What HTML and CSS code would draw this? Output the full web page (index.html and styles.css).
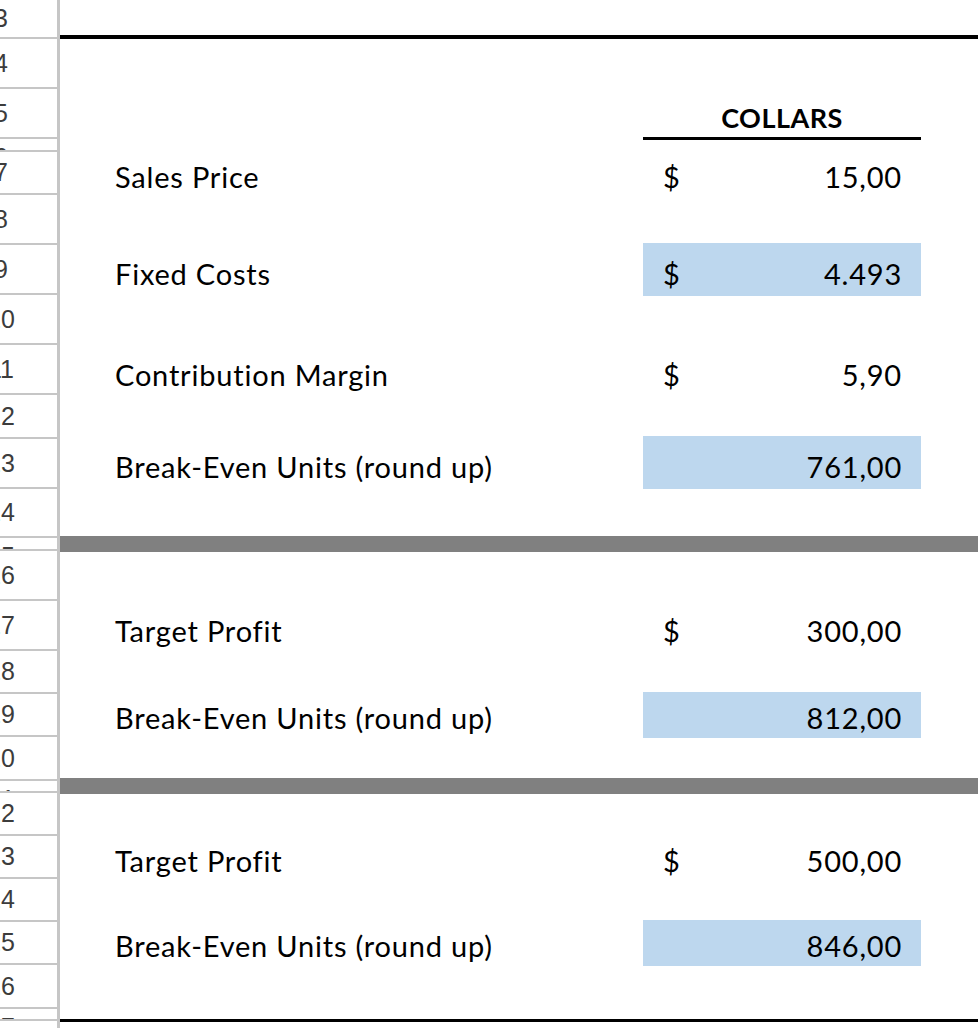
FILE: index.html
```html
<!DOCTYPE html>
<html lang="en">
<head>
<meta charset="utf-8">
<title>Break-Even Analysis</title>
<link rel="stylesheet" href="styles.css">
</head>
<body>
<div class="sheet">
  <div class="rowhead">
    <div class="rh h37"><span>3</span></div>
    <div class="rh h48"><span>4</span></div>
    <div class="rh h48"><span>5</span></div>
    <div class="rh h11 hidden"><span>6</span></div>
    <div class="rh h41"><span>7</span></div>
    <div class="rh h48"><span>8</span></div>
    <div class="rh h48"><span>9</span></div>
    <div class="rh h48"><span>10</span></div>
    <div class="rh h48"><span>11</span></div>
    <div class="rh h42"><span>12</span></div>
    <div class="rh h48"><span>13</span></div>
    <div class="rh h47"><span>14</span></div>
    <div class="rh h11 hidden"><span>15</span></div>
    <div class="rh h48"><span>16</span></div>
    <div class="rh h48"><span>17</span></div>
    <div class="rh h41"><span>18</span></div>
    <div class="rh h41"><span>19</span></div>
    <div class="rh h42"><span>20</span></div>
    <div class="rh h10 hidden"><span>21</span></div>
    <div class="rh h41"><span>22</span></div>
    <div class="rh h41"><span>23</span></div>
    <div class="rh h41"><span>24</span></div>
    <div class="rh h41"><span>25</span></div>
    <div class="rh h42"><span>26</span></div>
    <div class="rh h10 hidden"><span>27</span></div>
    <div class="rh h48"><span>28</span></div>
  </div>

  <div class="grid">
    <div class="rule rule-top"></div>

    <div class="line title-row">
      <div class="lbl"></div>
      <div class="title">COLLARS</div>
    </div>

    <div class="line row-sales">
      <div class="lbl">Sales Price</div>
      <div class="val"><span>$</span><span>15,00</span></div>
    </div>

    <div class="line tall row-fixed">
      <div class="lbl">Fixed Costs</div>
      <div class="val fill"><span>$</span><span>4.493</span></div>
    </div>

    <div class="line row-margin">
      <div class="lbl">Contribution Margin</div>
      <div class="val"><span>$</span><span>5,90</span></div>
    </div>

    <div class="line tall row-be1">
      <div class="lbl">Break-Even Units (round up)</div>
      <div class="val fill"><span></span><span>761,00</span></div>
    </div>

    <div class="bar bar-1"></div>

    <div class="line row-tp1">
      <div class="lbl">Target Profit</div>
      <div class="val"><span>$</span><span>300,00</span></div>
    </div>

    <div class="line mid row-be2">
      <div class="lbl">Break-Even Units (round up)</div>
      <div class="val fill"><span></span><span>812,00</span></div>
    </div>

    <div class="bar bar-2"></div>

    <div class="line row-tp2">
      <div class="lbl">Target Profit</div>
      <div class="val"><span>$</span><span>500,00</span></div>
    </div>

    <div class="line mid row-be3">
      <div class="lbl">Break-Even Units (round up)</div>
      <div class="val fill"><span></span><span>846,00</span></div>
    </div>

    <div class="rule rule-bottom"></div>
  </div>
</div>
</body>
</html>
```

FILE: styles.css
```css
html, body {
  margin: 0;
  padding: 0;
  background: #ffffff;
  overflow: hidden;
}

.sheet {
  display: flex;
  width: 978px;
  height: 1028px;
  overflow: hidden;
}

/* ---------- row header column ---------- */
.rowhead {
  flex: none;
  width: 57px;
  border-right: 3px solid #c6c6c6;
  display: flex;
  flex-direction: column;
}

.rh {
  flex: none;
  border-bottom: 2px solid #c6c6c6;
  overflow: hidden;
  display: flex;
  align-items: center;
  font-family: "Liberation Sans", Arial, sans-serif;
  font-size: 25px;
  line-height: 25px;
  color: #3c3c3c;
}

.rh span {
  flex: none;
  width: 110px;
  margin-left: -54px;
  text-align: center;
}

.rh.hidden {
  align-items: flex-start;
}

.rh.hidden span {
  padding-top: 6px;
}

.h10 { height: 10px; }
.h11 { height: 11px; }
.h37 { height: 37px; }
.h41 { height: 41px; }
.h42 { height: 42px; }
.h47 { height: 47px; }
.h48 { height: 48px; }

/* ---------- main grid ---------- */
.grid {
  flex: 1;
  display: flex;
  flex-direction: column;
  font-family: Lato, "Carlito", "Open Sans", sans-serif;
  font-size: 29px;
  letter-spacing: 0.8px;
  color: #000000;
}

.rule {
  flex: none;
  background: #000000;
}

.rule-top {
  margin-top: 35px;
  height: 4px;
}

.rule-bottom {
  margin-top: 53px;
  height: 3px;
}

.bar {
  flex: none;
  height: 16px;
  background: #808080;
}

.bar-1 { margin-top: 47px; }
.bar-2 { margin-top: 40px; }

.line {
  flex: none;
  display: grid;
  grid-template-columns: 583px 278px 1fr;
  height: 34px;
}

.lbl {
  padding-left: 55px;
  line-height: 34px;
  white-space: nowrap;
}

.val {
  display: flex;
  justify-content: space-between;
  padding: 0 19px 0 20px;
  line-height: 34px;
  white-space: nowrap;
}

.fill {
  background: #bdd7ee;
}

.tall {
  height: 53px;
}

.tall .lbl,
.tall .val {
  padding-top: 14px;
}

.mid {
  height: 46px;
}

.mid .lbl,
.mid .val {
  padding-top: 9px;
}

/* title */
.title-row {
  margin-top: 63px;
  height: 38px;
}

.title {
  grid-column: 2;
  box-sizing: border-box;
  border-bottom: 3px solid #000000;
  text-align: center;
  font-weight: 700;
  font-size: 27px;
  letter-spacing: 0.5px;
  line-height: 32px;
}

/* vertical placement of rows */
.row-sales  { margin-top: 20px; }
.row-fixed  { margin-top: 49px; }
.row-margin { margin-top: 62px; }
.row-be1    { margin-top: 44px; }
.row-tp1    { margin-top: 62px; }
.row-be2    { margin-top: 44px; }
.row-tp2    { margin-top: 50px; }
.row-be3    { margin-top: 42px; }
```
